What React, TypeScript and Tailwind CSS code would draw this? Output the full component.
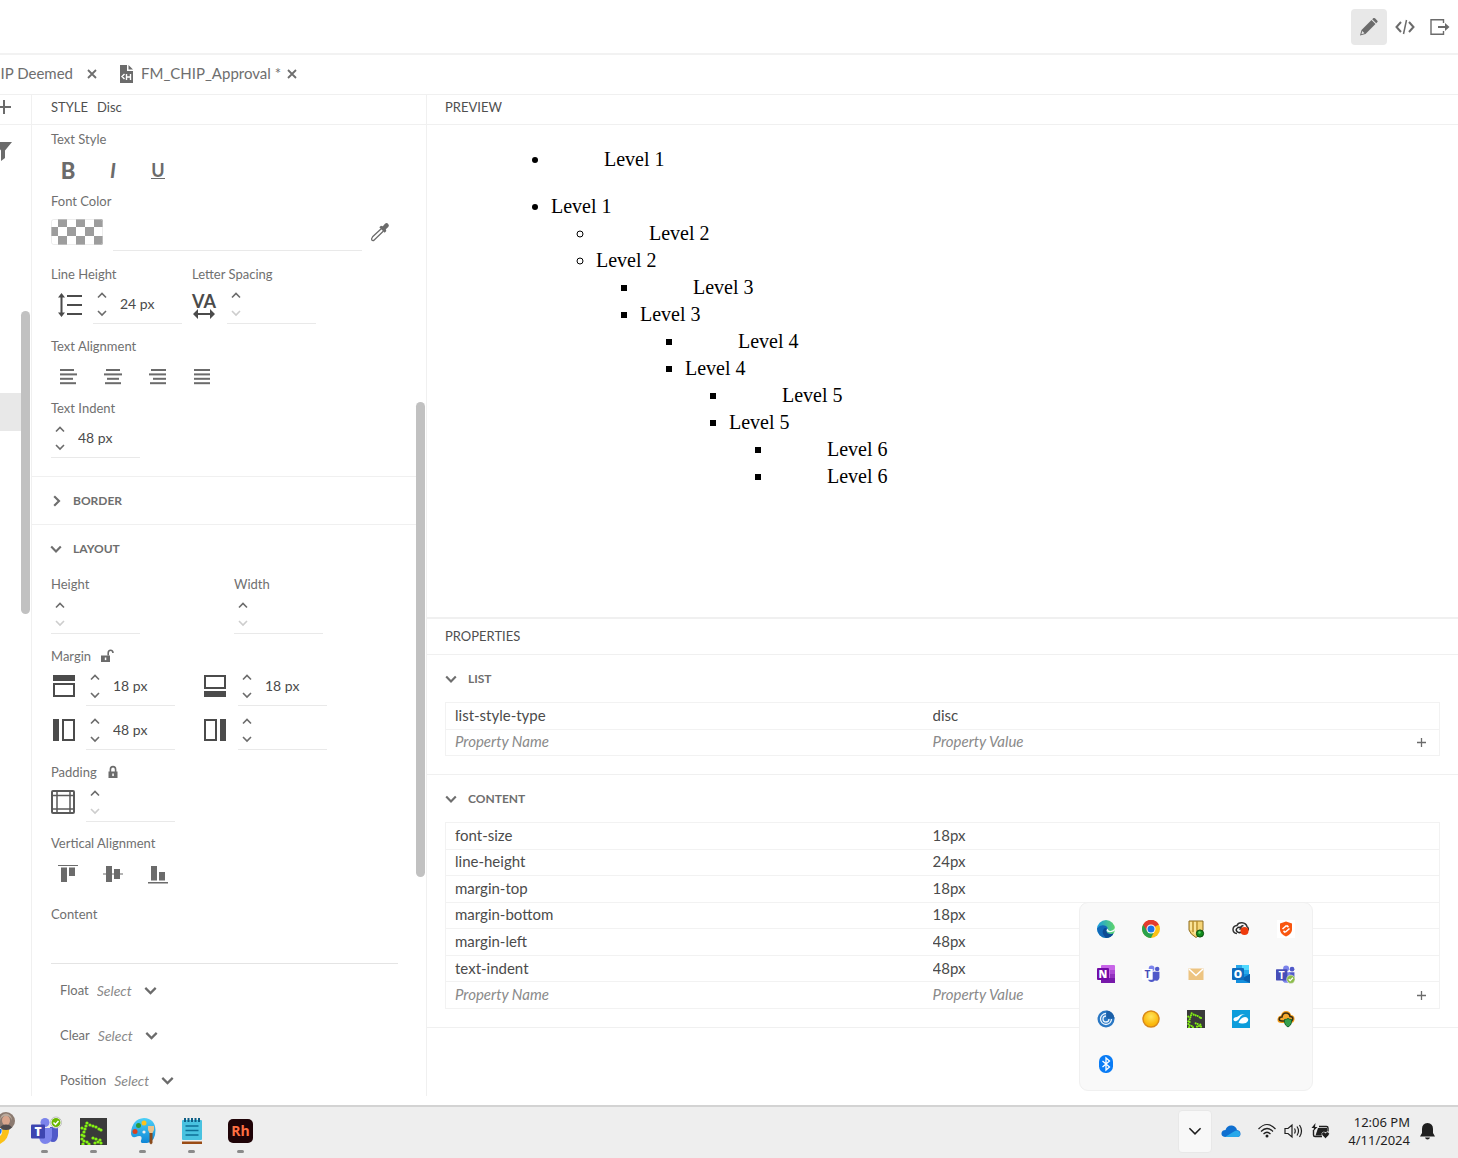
import React, { useId, type ReactNode } from "react";

/* ---------- generic glyphs ---------- */

function Chevron({ dir, size = 10, className = "", weight = 2 }: { dir: "up" | "down" | "right"; size?: number; className?: string; weight?: number }) {
  const d = dir === "up" ? "M1 7.5 5 3.5 9 7.5" : dir === "down" ? "M1 3 5 7 9 3" : "M3.5 1 7.5 5 3.5 9";
  return (
    <svg width={size} height={size} viewBox="0 0 10 10" fill="none" stroke="currentColor" strokeWidth={weight} className={className} aria-hidden="true">
      <path d={d} />
    </svg>
  );
}

function Cross() {
  return (
    <svg width="10" height="10" viewBox="0 0 10 10" stroke="currentColor" strokeWidth="1.8" className="block" aria-hidden="true">
      <path d="M1 1 9 9M9 1 1 9" />
    </svg>
  );
}

function Plus({ size }: { size: number }) {
  return (
    <svg width={size} height={size} viewBox="0 0 14 14" stroke="currentColor" strokeWidth="2" className="block" aria-hidden="true">
      <path d="M7 0V14M0 7H14" />
    </svg>
  );
}

function Lines({ rows }: { rows: [number, number][] }) {
  return (
    <svg width="18" height="18" viewBox="0 0 18 18" fill="currentColor" aria-hidden="true">
      {rows.map(([x, w], i) => (
        <rect key={i} x={x} y={1 + i * 4.4} width={w} height="2" />
      ))}
    </svg>
  );
}

/* ---------- form pieces ---------- */

function Label({ children, htmlFor }: { children: ReactNode; htmlFor?: string }) {
  return (
    <label htmlFor={htmlFor} className="block h-5 text-[13px] leading-5 text-[#707070]">
      {children}
    </label>
  );
}

function Stepper({ id, label, value = "", canDecrease = true }: { id?: string; label?: string; value?: string; canDecrease?: boolean }) {
  return (
    <div className="flex h-10 w-[89px] items-center border-b border-[#e9e9e9] pt-px">
      <div className="flex w-4 shrink-0 flex-col items-center gap-2 pl-[2px] text-[#6b6b6b]">
        <button type="button" aria-label="Increase" className="block">
          <Chevron dir="up" weight={1.6} />
        </button>
        <button type="button" aria-label="Decrease" className={canDecrease ? "block" : "block text-[#cdcdcd]"}>
          <Chevron dir="down" weight={1.6} />
        </button>
      </div>
      <input id={id} aria-label={label} defaultValue={value} className="ml-[11px] w-full min-w-0 bg-transparent text-sm text-[#4b4b4b] outline-none" />
    </div>
  );
}

function ToolButton({ label, children }: { label: string; children: ReactNode }) {
  return (
    <button type="button" aria-label={label} className="flex h-full w-[34px] items-center justify-center">
      {children}
    </button>
  );
}

function ToolRow({ children }: { children: ReactNode }) {
  return <div className="flex h-[42px] gap-[11px] text-[#6b6b6b]">{children}</div>;
}

function SelectRow({ label }: { label: string }) {
  const id = useId();
  return (
    <div className="flex h-[45px] items-center gap-2 pl-[9px]">
      <label htmlFor={id} className="text-[13px] text-[#707070]">
        {label}
      </label>
      <div className="relative">
        <select id={id} className="block appearance-none bg-transparent pr-[25px] text-sm text-[#8a8a8a] italic outline-none">
          <option>Select</option>
        </select>
        <Chevron dir="down" size={13} weight={1.7} className="pointer-events-none absolute top-[3px] right-0 text-[#6b6b6b]" />
      </div>
    </div>
  );
}

function SectionHead({ title, open, className = "" }: { title: string; open: boolean; className?: string }) {
  return (
    <button type="button" aria-expanded={open} className={`flex items-center text-xs font-bold text-[#6e6e6e] ${className}`}>
      <Chevron dir={open ? "down" : "right"} size={12} weight={1.8} />
      <span className="ml-[11px]">{title}</span>
    </button>
  );
}

/* ---------- box icons ---------- */

function MarginIcon({ side }: { side: "top" | "bottom" | "left" | "right" }) {
  const shapes = {
    top: [<rect key="a" x="2" y="1" width="22" height="6" fill="currentColor" stroke="none" />, <rect key="b" x="3" y="10" width="20" height="12" />],
    bottom: [<rect key="a" x="1" y="17" width="22" height="6" fill="currentColor" stroke="none" />, <rect key="b" x="2" y="2" width="20" height="12" />],
    left: [<rect key="a" x="2" y="1" width="6" height="22" fill="currentColor" stroke="none" />, <rect key="b" x="12" y="2" width="11" height="20" />],
    right: [<rect key="a" x="17" y="1" width="6" height="22" fill="currentColor" stroke="none" />, <rect key="b" x="2" y="2" width="11" height="20" />],
  };
  return (
    <svg width="24" height="24" viewBox="0 0 24 24" fill="none" stroke="currentColor" strokeWidth="2" className="shrink-0 text-[#4b4b4b]" aria-hidden="true">
      {shapes[side]}
    </svg>
  );
}

function Lock({ open = false }: { open?: boolean }) {
  return (
    <svg width="14" height="14" viewBox="0 0 14 14" fill="none" className="block" aria-hidden="true">
      <rect x={open ? 0 : 2.5} y="6.5" width="9" height="6.5" fill="#6b6b6b" />
      <path d={open ? "M7.2 6.5V4Q7.2 1.2 9.6 1.2 12 1.2 12 4" : "M4.4 7V4.4Q4.4 1.6 7 1.6 9.6 1.6 9.6 4.4V7"} stroke="#6b6b6b" strokeWidth="1.6" />
      <rect x={open ? 3.8 : 6.3} y="8.5" width="1.5" height="2.6" fill="#fff" />
    </svg>
  );
}

/* ---------- style panel ---------- */

function StylePanel() {
  return (
    <div className="flex w-[395px] shrink-0 flex-col border-r border-[#f0f0f0]">
      <div className="flex h-[30px] shrink-0 items-center gap-[9px] border-b border-[#f0f0f0] pb-1 pl-[19px] text-[13px] text-[#4f4f4f]">
        <span>STYLE</span>
        <span>Disc</span>
      </div>
      <div className="flex min-h-0 flex-1 overflow-hidden">
        <form className="min-w-0 flex-1">
          <div className="px-[19px] pt-1">
            <Label>Text Style</Label>
            <ToolRow>
              <ToolButton label="Bold">
                <span className="text-[22px] font-black">B</span>
              </ToolButton>
              <ToolButton label="Italic">
                <span className="text-[21px] font-bold italic">I</span>
              </ToolButton>
              <ToolButton label="Underline">
                <span className="border-b border-[#6b6b6b] text-lg leading-4 font-bold">U</span>
              </ToolButton>
            </ToolRow>
            <Label htmlFor="color">Font Color</Label>
            <div className="flex h-10 items-center">
              <svg width="52" height="26" viewBox="0 0 52 26" className="mt-[2px] shrink-0 rounded-xs" aria-hidden="true">
                <rect width="52" height="26" fill="#fff" />
                <path d="M7 0h9v8H7zM25 0h9v8h-9zM43 0h9v8h-9zM0 8h7v9H0zM16 8h9v9h-9zM34 8h9v9h-9zM7 17h9v9H7zM25 17h9v9h-9zM43 17h9v9h-9z" fill="#9d9d9d" />
                <rect x=".5" y=".5" width="51" height="25" rx="2" fill="none" stroke="#dcdcdc" strokeOpacity=".5" />
              </svg>
              <input id="color" className="ml-[10px] h-full w-[249px] shrink-0 border-b border-[#e9e9e9] outline-none" />
              <button type="button" aria-label="Pick color" className="ml-2 shrink-0">
                <svg width="20" height="20" viewBox="0 0 20 20" className="mt-[2px] block" aria-hidden="true">
                  <path d="M11.500 6.500 2.600 14.800Q1.200 16.500 1.700 17.800q.9 1.100 2.300.5L13.500 9" fill="#fff" stroke="#6b6b6b" strokeWidth="1.300" />
                  <path d="M9.300 5.300l1.700-1.600 1.800.6L15 1.700Q16.700.400 18.200 1.900 19.600 3.400 18.300 5L15.800 7.300l.5 1.800L14.700 10.700z" fill="#6b6b6b" />
                </svg>
              </button>
            </div>
            <div className="flex gap-[10px] pt-[13px]">
              <div>
                <Label htmlFor="line-height">Line Height</Label>
                <div className="flex items-center">
                  <svg width="42" height="26" viewBox="0 0 42 26" fill="none" stroke="#4b4b4b" strokeWidth="2" className="shrink-0" aria-hidden="true">
                    <path d="M16 5H31M16 14H31M16 23H31M10.500 5V24" />
                    <path d="M7 6.500h7L10.500 2zM7 21.500h7L10.500 26z" fill="#4b4b4b" stroke="none" />
                  </svg>
                  <Stepper id="line-height" value="24 px" />
                </div>
              </div>
              <div>
                <Label htmlFor="letter-spacing">Letter Spacing</Label>
                <div className="flex items-center">
                  <div className="flex w-[35px] flex-col items-start pt-1 text-[#4b4b4b]">
                    <span className="text-lg leading-4 font-bold">VA</span>
                    <svg width="24" height="10" viewBox="0 0 24 10" fill="#4b4b4b" aria-hidden="true">
                      <path d="M1 5 6 0V4H18V0L23 5 18 10V6H6V10z" />
                    </svg>
                  </div>
                  <Stepper id="letter-spacing" canDecrease={false} />
                </div>
              </div>
            </div>
            <div className="pt-3">
              <Label>Text Alignment</Label>
              <ToolRow>
                <ToolButton label="Align left"><Lines rows={[[1, 14], [1, 17], [1, 13], [1, 16]]} /></ToolButton>
                <ToolButton label="Align center"><Lines rows={[[2, 14], [0, 18], [3, 12], [1, 16]]} /></ToolButton>
                <ToolButton label="Align right"><Lines rows={[[2, 15], [0, 17], [4, 13], [1, 16]]} /></ToolButton>
                <ToolButton label="Justify"><Lines rows={[[0, 16], [0, 16], [0, 16], [0, 16]]} /></ToolButton>
              </ToolRow>
            </div>
            <Label htmlFor="indent">Text Indent</Label>
            <Stepper id="indent" value="48 px" />
          </div>
          <div className="mt-[18px] border-y border-[#f0f0f0]">
            <SectionHead title="BORDER" open={false} className="h-[47px] px-[18px]" />
          </div>
          <SectionHead title="LAYOUT" open className="h-[47px] px-[18px]" />
          <div className="px-[19px] pt-[2px]">
            <div className="flex gap-[94px]">
              <div>
                <Label htmlFor="height">Height</Label>
                <Stepper id="height" canDecrease={false} />
              </div>
              <div>
                <Label htmlFor="width">Width</Label>
                <Stepper id="width" canDecrease={false} />
              </div>
            </div>
            <fieldset className="pt-3">
              <div className="flex items-center gap-[10px]">
                <Label>Margin</Label>
                <button type="button" aria-label="Link margins"><Lock open /></button>
              </div>
              <div className="grid grid-cols-[124px_124px] gap-x-[28px] gap-y-1">
                <div className="flex items-center gap-[11px]"><MarginIcon side="top" /><Stepper label="Margin top" value="18 px" /></div>
                <div className="flex items-center gap-[11px]"><MarginIcon side="bottom" /><Stepper label="Margin bottom" value="18 px" /></div>
                <div className="flex items-center gap-[11px]"><MarginIcon side="left" /><Stepper label="Margin left" value="48 px" /></div>
                <div className="flex items-center gap-[11px]"><MarginIcon side="right" /><Stepper label="Margin right" /></div>
              </div>
            </fieldset>
            <fieldset className="pt-3">
              <div className="flex items-center gap-[9px]">
                <Label>Padding</Label>
                <button type="button" aria-label="Unlink padding"><Lock /></button>
              </div>
              <div className="flex items-center gap-[11px]">
                <svg width="24" height="24" viewBox="0 0 24 24" fill="none" stroke="#5a5a5a" strokeWidth="1.500" aria-hidden="true">
                  <rect x="1" y="1" width="22" height="22" rx="1" strokeWidth="2" />
                  <path d="M6 1V23M19 1V23M1 5.500H23M1 19H23" />
                </svg>
                <Stepper label="Padding" canDecrease={false} />
              </div>
            </fieldset>
            <div className="pt-[11px]">
              <Label>Vertical Alignment</Label>
              <ToolRow>
                <ToolButton label="Align top">
                  <svg width="20" height="20" viewBox="0 0 20 20" fill="currentColor" aria-hidden="true">
                    <path d="M0 1h20v1H0zM3 3.500h6V18H3zM11 3.500h6V12h-6z" />
                  </svg>
                </ToolButton>
                <ToolButton label="Align middle">
                  <svg width="20" height="20" viewBox="0 0 20 20" fill="currentColor" aria-hidden="true">
                    <path d="M0 9.500h20v1H0zM3 2h6v16H3zM11 5h6v10h-6z" />
                  </svg>
                </ToolButton>
                <ToolButton label="Align bottom">
                  <svg width="20" height="20" viewBox="0 0 20 20" fill="currentColor" aria-hidden="true">
                    <path d="M0 18h20v1.500H0zM3 2h6v14.500H3zM11 8h6v8.500h-6z" />
                  </svg>
                </ToolButton>
              </ToolRow>
            </div>
            <div className="pt-[9px]">
              <Label htmlFor="content">Content</Label>
              <input id="content" className="h-10 w-[347px] border-b border-[#e4e4e4] outline-none" />
            </div>
            <div className="pt-1">
              <SelectRow label="Float" />
              <SelectRow label="Clear" />
              <SelectRow label="Position" />
            </div>
          </div>
        </form>
        <div className="mr-px w-[9px] shrink-0 pt-[277px]">
          <div className="h-[475px] rounded-full bg-[#c1c1c1]" />
        </div>
      </div>
    </div>
  );
}

/* ---------- preview ---------- */

const LIST_STYLE = ["list-disc pl-[124px]", "list-[circle] pl-[45px]", "list-[square] pl-11", "list-[square] pl-[45px]", "list-[square] pl-11", "list-[square] pl-[45px]"];

function Nested({ level }: { level: number }) {
  return (
    <ul className={LIST_STYLE[level - 1]}>
      <li className={level === 1 ? "mb-5" : ""}>
        <p className="pl-[53px]">Level {level}</p>
      </li>
      <li>
        <p className={level === 6 ? "pl-[53px]" : ""}>Level {level}</p>
        {level < 6 && <Nested level={level + 1} />}
      </li>
    </ul>
  );
}

/* ---------- properties ---------- */

function PropertyTable({ label, rows, className }: { label: string; rows: [string, string][]; className: string }) {
  const cell = "block w-full bg-transparent text-[15px] leading-5 outline-none placeholder:text-[#8a8a8a] placeholder:italic";
  return (
    <table aria-label={label} className={`w-full table-fixed border-collapse border border-[#f2f2f2] text-[#4b4b4b] ${className}`}>
      <tbody>
        {[...rows, ["", ""]].map(([name, value], i) => (
          <tr key={i} className="border-b border-[#f2f2f2]">
            <td className="w-[48%] pt-0 pb-[2px] pl-[9px]">
              <input aria-label="Property name" defaultValue={name} placeholder="Property Name" className={cell} />
            </td>
            <td className="pt-0 pb-[2px] pl-[10px]">
              <input aria-label="Property value" defaultValue={value} placeholder="Property Value" className={cell} />
            </td>
            <td className="w-9 py-0 text-[#6b6b6b]">
              {name === "" && (
                <button type="button" aria-label="Add property" className="mx-auto block">
                  <Plus size={9} />
                </button>
              )}
            </td>
          </tr>
        ))}
      </tbody>
    </table>
  );
}

/* ---------- app icons ---------- */

const PIXELS: [number, number][] = [
  [7, 5], [10, 7], [13, 8], [16, 9], [19, 11], [21, 12], [6, 8], [5, 11], [2, 10], [4, 14], [2, 17], [4, 18], [2, 21], [4, 23], [7, 24], [3, 26], [9, 26],
  [13, 20], [16, 21], [20, 22], [18, 24], [21, 25], [15, 25],
];

function PixelG({ size }: { size: number }) {
  return (
    <svg width={size} height={size} viewBox="0 0 27 27" aria-hidden="true">
      <rect width="27" height="27" fill="#3a3a3a" />
      {PIXELS.map(([x, y], i) => (
        <circle key={i} cx={x} cy={y} r="1.6" fill="#84f213" />
      ))}
    </svg>
  );
}

function Teams({ size, badge = false, light = false }: { size: number; badge?: boolean; light?: boolean }) {
  return (
    <svg width={size} height={size} viewBox="0 0 32 32" aria-hidden="true">
      <circle cx="27" cy="7" r="4" fill="#5059c9" />
      <circle cx="17" cy="6" r="5" fill="#7b83eb" />
      <path d="M22 12h9v10q-1 6-6 6-4 0-4-4z" fill="#5059c9" />
      <path d="M10 12h14v11q-1 7-7 7-6 0-7-7z" fill={light ? "#5059c9" : "#7b83eb"} />
      <rect x="0" y="7" width="19" height="19" rx="1" fill={light ? "#fff" : "#464eb8"} />
      <text x="9.500" y="23" fontSize="18" fontWeight="700" textAnchor="middle" fill={light ? "#464eb8" : "#fff"} fontFamily="Open Sans, sans-serif">T</text>
      {badge && (
        <>
          <circle cx="25" cy="24" r="7" fill="#8cbd4b" stroke="#eee" strokeWidth="1" />
          <path d="m21.500 24 2.500 2.500 4.500-5" fill="none" stroke="#fff" strokeWidth="2" />
        </>
      )}
    </svg>
  );
}

function Chrome({ size }: { size: number }) {
  return (
    <svg width={size} height={size} viewBox="0 0 20 20" aria-hidden="true">
      <circle cx="10" cy="10" r="10" fill="#fbc116" />
      <path d="M10 10 1.340 5A10 10 0 0 1 18.660 5z" fill="#e33b2e" />
      <path d="M10 10 1.340 5A10 10 0 0 0 10 20L14 12z" fill="#2aa24c" />
      <path d="M10 5H18.660A10 10 0 0 0 1.340 5L5.700 12.500z" fill="#e33b2e" />
      <circle cx="10" cy="10" r="5" fill="#fff" />
      <circle cx="10" cy="10" r="3.900" fill="#1a73e8" />
    </svg>
  );
}

function TrayIcon({ name }: { name: string }) {
  switch (name) {
    case "Edge":
      return (
        <svg width="18" height="18" viewBox="0 0 18 18" aria-hidden="true">
          <defs>
            <linearGradient id="edge" x1="0" x2="1"><stop stopColor="#1b9de2" /><stop offset="1" stopColor="#5fd668" /></linearGradient>
          </defs>
          <circle cx="9" cy="9" r="9" fill="url(#edge)" />
          <path d="M0 8.500Q3 4.500 7.500 5.500 11 6.300 10.800 9.500 9 9.800 9.500 12 11 15 16.500 13.500 14 18 9 18 1 17.500 0 8.500z" fill="#1268b8" />
          <path d="M7 8.500Q3.500 13 9 17.900q5 0 7.500-4.400-6 1.500-7-1.500-.400-1.500.5-2.500Q9 7 7 8.500z" fill="#0c4a94" />
          <path d="M10.500 8.500q-1.500 1.500-.6 2.800Q12 13.500 17.500 11q.6-1.500.4-3-2 3.500-5 3-1.800-.3-2.400-2.500z" fill="#f4fbff" />
        </svg>
      );
    case "Chrome":
      return <Chrome size={18} />;
    case "Shield monitor":
      return (
        <svg width="18" height="18" viewBox="0 0 18 18" aria-hidden="true">
          <path d="M2 1h14v9q-1 4-7 7.500Q3 14 2 10z" fill="#f5d477" stroke="#8f6d1e" />
          <path d="M6 1v11M10 1v12" stroke="#b38a2c" strokeWidth="1.300" />
          <path d="M4 2v8M8 2v12" stroke="#fff3bf" strokeWidth="1" />
          <circle cx="13" cy="13.500" r="3.600" fill="#118a1c" stroke="#064d0c" />
          <circle cx="12.500" cy="12.500" r="1.200" fill="#5ed566" />
        </svg>
      );
    case "Creative Cloud":
      return (
        <svg width="18" height="18" viewBox="0 0 18 18" fill="none" aria-hidden="true">
          <path d="M5 13.500Q1 13 1 9.500T5 5.500Q6 2.500 10 2.700 14 3 15 6.500q2 1.500 1 4" stroke="#333" strokeWidth="1.500" />
          <path d="M9.500 12Q7 13.500 5 11.500T6 7.500q2-1 4 1" stroke="#222" strokeWidth="1.500" />
          <path d="M8 10q0-4 3.500-4.500" stroke="#333" strokeWidth="1.300" />
          <circle cx="12.500" cy="11" r="4" fill="#ef3b0c" />
        </svg>
      );
    case "Security":
      return (
        <svg width="18" height="18" viewBox="0 0 18 18" aria-hidden="true">
          <rect width="18" height="18" fill="#fff" />
          <path d="M9 1.500 15 3.500V10q-.5 4-6 6.500Q3.500 14 3 10V3.500z" fill="#f9560f" />
          <path d="m5.500 9 4-3.500M8.500 12l4-3.500M9.500 5.500l2 1.500M6.500 11l2 1.500" stroke="#fff" strokeWidth="1.600" />
        </svg>
      );
    case "OneNote":
      return (
        <svg width="18" height="18" viewBox="0 0 18 18" aria-hidden="true">
          <rect x="4" width="14" height="18" rx="1" fill="#c865e8" />
          <path d="M13 5h5v4h-5z" fill="#ae4bd5" /><path d="M13 9h5v4h-5z" fill="#9332bf" /><path d="M4 13h14v5H4z" fill="#7719aa" />
          <rect y="3" width="12" height="12" rx="1" fill="#720ba5" />
          <text x="6" y="12.800" fontSize="10.500" fontWeight="800" textAnchor="middle" fill="#fff" fontFamily="Open Sans, sans-serif">N</text>
        </svg>
      );
    case "Teams classic":
      return <Teams size={18} light />;
    case "Mail":
      return (
        <svg width="16" height="18" viewBox="0 0 16 18" aria-hidden="true">
          <rect x=".5" y="3.500" width="15" height="11.500" fill="#edc481" />
          <path d="m1 4 7 6.500L15 4" fill="none" stroke="#fff" strokeWidth="1.600" />
        </svg>
      );
    case "Outlook":
      return (
        <svg width="18" height="18" viewBox="0 0 18 18" aria-hidden="true">
          <path d="M4 0h13v9H4z" fill="#28a8ea" /><path d="M10 0h7v5h-7z" fill="#50d9ff" /><path d="M4 9h14v9H4z" fill="#1490df" /><path d="m18 9-9 5 9 4z" fill="#0a5fae" />
          <rect y="3" width="12" height="12" rx="1" fill="#0f6cbd" />
          <text x="6" y="12.800" fontSize="10.500" fontWeight="800" textAnchor="middle" fill="#fff" fontFamily="Open Sans, sans-serif">O</text>
        </svg>
      );
    case "Teams":
      return <Teams size={19} badge />;
    case "Workspace":
      return (
        <svg width="18" height="18" viewBox="0 0 18 18" fill="none" aria-hidden="true">
          <circle cx="9" cy="9" r="8.500" fill="#2a78c4" />
          <path d="M14.500 9A5.500 5.500 0 1 1 9 3.500M12 9a3 3 0 1 1-3-3" stroke="#eaf4fd" strokeWidth="1.300" />
          <path d="M9.500.5V8.500H17.500Q16.500 1.500 9.500.5z" fill="#1d60a8" />
        </svg>
      );
    case "Status":
      return (
        <svg width="18" height="18" viewBox="0 0 18 18" aria-hidden="true">
          <defs><radialGradient id="sun" cy=".35"><stop stopColor="#ffe55c" /><stop offset="1" stopColor="#fbb80c" /></radialGradient></defs>
          <circle cx="9" cy="9" r="8" fill="url(#sun)" stroke="#d8891a" strokeWidth="1.500" />
        </svg>
      );
    case "Grid":
      return <PixelG size={18} />;
    case "Zscaler":
      return (
        <svg width="18" height="18" viewBox="0 0 18 18" aria-hidden="true">
          <rect width="18" height="18" fill="#0d9ddb" />
          <path d="M1.500 10Q1 7.500 5 7q4-3.500 8-3-4 1-5 3.500-2 3.500-4 3.800-2 0-2.500-1.300z" fill="#fff" />
          <path d="M6.500 12.500Q8 9 10 8q3-1.500 5-.5 2 1.500 1 3.500-1.500 2.500-5 2.500-3 .3-4.500-1z" fill="#fff" />
        </svg>
      );
    case "Cloud shield":
      return (
        <svg width="18" height="18" viewBox="0 0 18 18" aria-hidden="true">
          <path d="M4.500 13Q0 13 .5 9 1 6 4 5.500 5 1 9 1t5 4q4 .5 3.500 4.500Q17 13 13.500 13z" fill="#f59e1b" />
          <path d="M5 11q-3 0-2.700-2.200Q2.600 7 5 7q.6-4 4-4t4 3.500q3 0 2.700 2.300Q15.400 11 13 11z" fill="#f5a82c" stroke="#3a2c12" strokeWidth="1.600" />
          <path d="M7.500 9.500q2 0 3.500-1 1.500 1 3.500 1v3q-.5 3-3.500 4.500-3-1.500-3.500-4.500z" fill="#35a04c" stroke="#14632b" />
        </svg>
      );
    default:
      return (
        <svg width="14" height="18" viewBox="0 0 14 18" aria-hidden="true">
          <rect width="14" height="18" rx="6.500" fill="#0a7cf5" />
          <path d="M3.500 6 10.500 12 7 15V3l3.500 3-7 6" fill="none" stroke="#fff" strokeWidth="1.300" />
        </svg>
      );
  }
}

const TRAY = ["Edge", "Chrome", "Shield monitor", "Creative Cloud", "Security", "OneNote", "Teams classic", "Mail", "Outlook", "Teams", "Workspace", "Status", "Grid", "Zscaler", "Cloud shield", "Bluetooth"];

function TaskButton({ label, children }: { label: string; children: ReactNode }) {
  return (
    <button type="button" aria-label={label} className="flex w-[49px] flex-col items-center gap-1 pt-[9px]">
      <span className="flex h-[30px] items-center">{children}</span>
      <span className="h-[3px] w-[7px] rounded-full bg-[#8a8a8a]" />
    </button>
  );
}

function Taskbar() {
  return (
    <footer className="flex h-[53px] shrink-0 justify-between border-t-2 border-[#d3d3d3] bg-[#eee] text-[#1f1f1f]">
      <div className="flex overflow-hidden">
        <button type="button" aria-label="Chrome" className="flex w-5 items-start overflow-hidden pt-[5px]">
          <svg width="16" height="34" viewBox="0 0 16 34" className="shrink-0" aria-hidden="true">
            <path d="M0 32Q9 28 9.500 15L2 16Q3 22 0 24z" fill="#fbc116" />
            <path d="M0 17h1.500q.5 4-1.500 5z" fill="#1a73e8" />
            <circle cx="6" cy="9" r="9" fill="#8b7a70" />
            <ellipse cx="6" cy="8.500" rx="4" ry="4.800" fill="#d9a58c" />
            <path d="M0 9q0-7 6-7.500 6 .5 6 7.500-1-5-6-5T0 9z" fill="#b9a99c" />
            <path d="M0 15.500q2-3 6-3t6 3Q9.500 18 6 18t-6-2.500z" fill="#4e4a4c" />
          </svg>
        </button>
        <TaskButton label="Teams">
          <svg width="34" height="30" viewBox="0 0 34 30" aria-hidden="true">
            <circle cx="17" cy="6.500" r="4.500" fill="#7b83eb" />
            <path d="M22 11h8v9q-1 6-5 6-4 0-4-4z" fill="#5059c9" />
            <path d="M11 12h13v9q-1 7-7 7-5 0-6-7z" fill="#7b83eb" />
            <rect x="3" y="8.500" width="14" height="14" rx="1" fill="#3d45b0" />
            <text x="10" y="20" fontSize="12" fontWeight="800" textAnchor="middle" fill="#fff" fontFamily="Open Sans, sans-serif">T</text>
            <circle cx="28" cy="6.500" r="5.500" fill="#fff" stroke="#bdbdbd" />
            <circle cx="28" cy="6.500" r="4.500" fill="#6bb700" />
            <path d="m25.500 6.500 2 2 3-3.500" fill="none" stroke="#fff" strokeWidth="1.500" />
          </svg>
        </TaskButton>
        <TaskButton label="Grid"><PixelG size={27} /></TaskButton>
        <TaskButton label="Paint">
          <svg width="26" height="28" viewBox="0 0 26 28" aria-hidden="true">
            <defs><linearGradient id="paint" x2="0" y2="1"><stop stopColor="#4cd0f7" /><stop offset="1" stopColor="#0f86d6" /></linearGradient></defs>
            <path d="M14 1Q25 1.500 25.500 13 25.500 25 17 26h-5q-2-1-.5-4 .5-3-2-3-2 0-4 1Q1 21 1 16 2 2 14 1z" fill="url(#paint)" />
            <circle cx="8.500" cy="8.500" r="2.500" fill="#2c9a37" /><circle cx="14" cy="6" r="2.500" fill="#fcc21b" /><circle cx="5" cy="14.500" r="2.500" fill="#d8421e" />
            <circle cx="14" cy="15" r="1.600" fill="#eee" />
            <path d="M18 9h6v4l-1.500 3h-3L18 13z" fill="#e9c38e" /><path d="M19.500 16h3v10l-1.500 1.500L19.500 26z" fill="#8a4b1c" />
          </svg>
        </TaskButton>
        <TaskButton label="Notepad">
          <svg width="22" height="28" viewBox="0 0 22 28" aria-hidden="true">
            <rect x="1" y="24" width="20" height="3" fill="#9a4b14" />
            <rect x="1" y="23" width="20" height="1.500" fill="#eee" />
            <rect x="1" y="3" width="20" height="20" rx="1" fill="#48c2e0" />
            <path d="M4 1v4M7.500 1v4M11 1v4M14.500 1v4M18 1v4" stroke="#0d5f86" strokeWidth="2" />
            <path d="M4.500 9h13M4.500 13.500h13M4.500 18h13" stroke="#0d6f96" strokeWidth="1.300" />
          </svg>
        </TaskButton>
        <TaskButton label="RoboHelp">
          <span className="flex h-6 w-[25px] items-center justify-center rounded-[5px] bg-[#1f0307] font-['Open_Sans',sans-serif] text-sm font-bold text-[#ff7043]">Rh</span>
        </TaskButton>
      </div>

      <div className="flex items-center pr-[22px] pb-[3px]">
        <button type="button" aria-label="Show hidden icons" className="flex h-[43px] w-[34px] items-center justify-center rounded border border-[#e8e8e8] bg-[#f8f8f8]">
          <Chevron dir="down" size={14} weight={1.1} />
        </button>
        <svg width="20" height="14" viewBox="0 0 20 14" className="ml-[9px]" aria-hidden="true">
          <path d="M4 13Q0 12.500.5 9 1 6 4.500 6 6 1 11 1.500q4 .5 5 4.500 3.500.5 3.500 4 0 3-3.500 3z" fill="#0f6fd0" />
          <path d="M4 13 13 7.500q3-2 5 0Q20 10 18.500 12q-1 1-2.500 1z" fill="#28a8ea" />
        </svg>
        <svg width="18" height="16" viewBox="0 0 18 16" fill="none" stroke="currentColor" strokeWidth="1.200" className="ml-[17px]" aria-hidden="true">
          <path d="M.5 6Q9-3 17.500 6M3 8.500Q9 2.500 15 8.500M5.500 11Q9 7.500 12.500 11" />
          <circle cx="9" cy="13" r="1.500" fill="currentColor" stroke="none" />
        </svg>
        <svg width="19" height="16" viewBox="0 0 19 16" fill="none" stroke="currentColor" strokeWidth="1.200" className="ml-2" aria-hidden="true">
          <path d="M1 5.500h3L8 2v12L4 10.500H1zM10.500 5.500q1.500 2.500 0 5M13 3.500q3 4.500 0 9M15.500 2q4 6 0 12" />
        </svg>
        <svg width="19" height="16" viewBox="0 0 19 16" className="ml-2" aria-hidden="true">
          <path d="M2.500 7v5q0 1.500 1.500 1.500h7M8 3.500h7.500q1.500 0 1.500 1.500v3.500" fill="none" stroke="currentColor" strokeWidth="1.400" />
          <path d="M7 5h9v4l-4 0-1.500 3.500H4.500z" fill="currentColor" />
          <path d="M4.500 0 .5 5h2.500l-1 3.500L6.500 4H4z" fill="currentColor" />
          <path d="m14.500 15.500-3.500-3.500q-1-2 1-3 1.500-.3 2.500 1 1-1.300 2.500-1 2 1 1 3z" fill="currentColor" stroke="#eee" strokeWidth=".5" />
        </svg>
        <div className="ml-[18px] text-right font-['Noto_Sans',sans-serif] text-[13px] leading-[18px]">
          <div>12:06 PM</div>
          <div>4/11/2024</div>
        </div>
        <svg width="17" height="18" viewBox="0 0 17 18" fill="currentColor" className="ml-[9px]" aria-hidden="true">
          <path d="M8.500 1Q14 1.500 14 7v4l2 3.500H1L3 11V7q0-5.500 5.500-6zM6 15.500h5Q10.500 17.500 8.500 17.500T6 15.500z" />
        </svg>
      </div>
    </footer>
  );
}

/* ---------- page ---------- */

export default function App() {
  return (
    <div className="relative flex h-screen flex-col overflow-hidden bg-white font-[Lato,sans-serif] text-[#4b4b4b]">
      <header className="flex h-[55px] shrink-0 items-center justify-end gap-2 border-b-2 border-[#f2f2f2] pr-2 text-[#6b6b6b]">
        <button type="button" aria-label="Edit" className="flex h-9 w-9 items-center justify-center rounded bg-[#e8e8e8]">
          <svg width="20" height="20" viewBox="0 0 20 20" aria-hidden="true">
            <path d="M1 18.500 2.500 13 12.500 3 16.500 7 6.500 17z" fill="currentColor" />
            <path d="m13.200 2.300 1.300-1.200q.8-.5 1.500.2l2.400 2.400q.6.7 0 1.400L17.200 6.300z" fill="currentColor" />
            <path d="m2.300 17.300 1-3.200L5.500 16.300z" fill="#e8e8e8" />
          </svg>
        </button>
        <button type="button" aria-label="Source view">
          <svg width="20" height="16" viewBox="0 0 20 16" fill="none" stroke="currentColor" strokeWidth="2" aria-hidden="true">
            <path d="M6 3 1.500 8 6 13M14 3l4.500 5L14 13" />
            <path d="M11.500 1 8.500 15" strokeWidth="1.500" />
          </svg>
        </button>
        <button type="button" aria-label="Exit" className="ml-[7px]">
          <svg width="20" height="18" viewBox="0 0 20 18" fill="none" stroke="currentColor" strokeWidth="1.400" aria-hidden="true">
            <path d="M13.500 5V1.700H1V16.300H13.500V13" />
            <path d="M8 9h8" strokeWidth="2" />
            <path d="m15 5 4.500 4L15 13z" fill="currentColor" stroke="none" />
          </svg>
        </button>
      </header>

      <nav className="flex h-10 shrink-0 items-center border-b border-[#f0f0f0] pb-[2px] text-[15px] text-[#6e6e6e]">
        <div className="flex w-[73px] justify-end overflow-hidden">
          <a href="#deemed" className="shrink-0">HIP Deemed</a>
        </div>
        <button type="button" aria-label="Close tab" className="ml-[14px]"><Cross /></button>
        <svg width="15" height="18" viewBox="0 0 15 18" className="ml-[22px]" aria-hidden="true">
          <path d="M1 0h7v6h6v12H1z" fill="#6b6b6b" /><path d="m9.500 0 4.500 4.500H9.500z" fill="#6b6b6b" />
          <path d="M5.500 9 3 11.500 5.500 14M7.500 9v6M11.500 9v6M7.500 12h4" fill="none" stroke="#fff" strokeWidth="1.400" />
        </svg>
        <a href="#approval" className="ml-[7px]">FM_CHIP_Approval *</a>
        <button type="button" aria-label="Close tab" className="ml-[6px]"><Cross /></button>
      </nav>

      <div className="mb-[9px] flex min-h-0 flex-1">
        <aside className="flex w-8 shrink-0 flex-col border-r border-[#f0f0f0]">
          <div className="h-[30px] shrink-0 border-b border-[#f0f0f0] pt-[5px] text-[#6b6b6b]">
            <button type="button" aria-label="Add style" className="-ml-[3px] block"><Plus size={14} /></button>
          </div>
          <div className="flex min-h-0 flex-1">
            <div className="flex-1">
              <button type="button" aria-label="Filter" className="mt-[17px] -ml-[6px] block text-[#6b6b6b]">
                <svg width="18" height="19" viewBox="0 0 18 19" fill="currentColor" className="block" aria-hidden="true">
                  <path d="M0 0h18L11 8.500V16l-4 3V8.500z" />
                </svg>
              </button>
              <div className="mt-[232px] h-[38px] bg-[#e8e8e8]" />
            </div>
            <div className="mr-px w-[9px] pt-[186px]">
              <div className="h-[303px] rounded-full bg-[#c1c1c1]" />
            </div>
          </div>
        </aside>

        <StylePanel />

        <main className="flex min-w-0 flex-1 flex-col">
          <h2 className="flex h-[30px] shrink-0 items-center border-b border-[#f0f0f0] pb-1 pl-[18px] text-[13px] text-[#4f4f4f]">PREVIEW</h2>
          <section className="h-[492px] shrink-0 pt-[21px] font-['Liberation_Serif',serif] text-xl leading-[27px] text-black">
            <Nested level={1} />
          </section>
          <h2 className="flex h-[38px] shrink-0 items-center border-t-2 border-b border-[#f0f0f0] pt-px pl-[18px] text-[13px] text-[#4f4f4f]">PROPERTIES</h2>
          <section className="border-b border-[#f0f0f0] px-[18px] pb-[18px]">
            <SectionHead title="LIST" open className="h-[47px]" />
            <PropertyTable label="List" rows={[["list-style-type", "disc"]]} className="h-[54px]" />
          </section>
          <section className="border-b border-[#f0f0f0] px-[18px] pb-[18px]">
            <SectionHead title="CONTENT" open className="h-[47px]" />
            <PropertyTable
              label="Content"
              rows={[["font-size", "18px"], ["line-height", "24px"], ["margin-top", "18px"], ["margin-bottom", "18px"], ["margin-left", "48px"], ["text-indent", "48px"]]}
              className="h-[187px]"
            />
          </section>
        </main>
      </div>

      <Taskbar />

      <div className="absolute right-[145px] bottom-[67px] grid h-[189px] w-[234px] grid-cols-5 grid-rows-4 rounded-[9px] border border-[#f0f0f0] bg-[#f9f9f9] p-1">
        {TRAY.map((name) => (
          <button key={name} type="button" aria-label={name} className="flex items-center justify-center">
            <TrayIcon name={name} />
          </button>
        ))}
      </div>
    </div>
  );
}
